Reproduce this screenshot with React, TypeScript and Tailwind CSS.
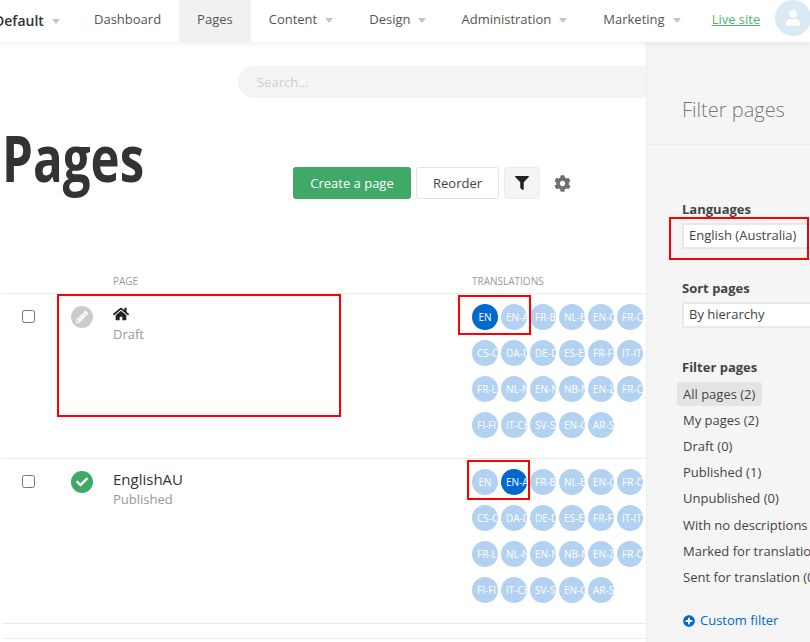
import React from "react";
import { FaHome, FaPencilAlt, FaCheck, FaFilter, FaCog, FaUser, FaPlusCircle } from "react-icons/fa";

const langs = ["FR-BE","NL-BE","EN-CA","FR-CA","CS-CZ","DA-DK","DE-DE","ES-ES","FR-FR","IT-IT","FR-LU","NL-NL","EN-NL","NB-NO","EN-ZA","FR-CH","FI-FI","IT-CH","SV-SE","EN-GB","AR-SA"];

function Caret() {
  return (
    <svg width="8" height="5" viewBox="0 0 8 5" className="ml-2 mt-[1px] shrink-0">
      <polygon points="0,0 8,0 4,5" fill="#c4c4c4" />
    </svg>
  );
}

function NavItem({ label, caret = false, active = false, tight = false }: { label: string; caret?: boolean; active?: boolean; tight?: boolean }) {
  return (
    <div className={`flex h-full items-center pb-[2px] pl-[18px] text-[13px] text-[#555] ${tight ? "pr-[17px]" : "pr-[18px]"} ${active ? "bg-[#f1f1f1]" : ""}`}>
      <span>{label}</span>
      {caret && <Caret />}
    </div>
  );
}

function Bubble({ code, active = false }: { code: string; active?: boolean }) {
  return (
    <div className={`h-[26px] w-[26px] overflow-hidden whitespace-nowrap rounded-full px-[5px] text-center text-[10px] leading-[26px] text-white ${active ? "bg-[#0069d0]" : "bg-[#b3d2f1]"}`}>
      {code}
    </div>
  );
}

function Row({ title, status, icon, activeIndex }: { title: React.ReactNode; status: string; icon: React.ReactNode; activeIndex: number }) {
  const all = ["EN", "EN-AU", ...langs];
  return (
    <div className="ml-[2px] flex h-[165px] border-b border-[#ececec]">
      <div className="w-[20px] shrink-0" />
      <div className="w-[49px] shrink-0 pt-[16px]">
        <input type="checkbox" className="m-0 block h-[13px] w-[13px]" />
      </div>
      <div className="w-[42px] shrink-0 pt-[12px]">{icon}</div>
      <div className="w-[359px] shrink-0 pt-[10px]">
        <div className="flex h-[20px] items-center text-[15px] leading-5 text-[#333]">{title}</div>
        <div className="text-[13px] leading-5 text-[#999]">{status}</div>
      </div>
      <div className="flex w-[174px] flex-wrap content-start gap-x-[3px] gap-y-[10px] pt-[10px]">
        {all.map((c, i) => (
          <Bubble key={c} code={c} active={i === activeIndex} />
        ))}
      </div>
    </div>
  );
}

const filters = ["My pages (2)", "Draft (0)", "Published (1)", "Unpublished (0)", "With no descriptions (0)", "Marked for translation (0)", "Sent for translation (0)"];

function Box({ className }: { className: string }) {
  return <div className={`pointer-events-none absolute border-2 border-[#ff0000] ${className}`} />;
}

export default function App() {
  return (
    <div className="relative h-[642px] w-[810px] overflow-hidden bg-white font-['Open_Sans',sans-serif] text-[#333]">
      <header className="relative z-10 flex h-[42px] items-center bg-white shadow-[0_1px_6px_rgba(0,0,0,0.08)]">
        <div className="ml-[-6px] flex h-full w-[82px] shrink-0 items-center pb-[1px] text-[14px] font-semibold text-[#333]">
          <span>Default</span>
          <Caret />
        </div>
        <NavItem label="Dashboard" />
        <NavItem label="Pages" active />
        <NavItem label="Content" caret />
        <NavItem label="Design" caret tight />
        <NavItem label="Administration" caret />
        <NavItem label="Marketing" caret />
        <a className="ml-[13px] whitespace-nowrap pb-[2px] text-[13px] text-[#4db86a] underline">Live site</a>
        <div className="ml-[15px] flex h-[36px] w-[36px] shrink-0 -translate-y-[3px] items-center justify-center rounded-full bg-[#daeaf4] text-[16px] text-white">
          <FaUser />
        </div>
      </header>

      <div className="flex h-[600px]">
        <main className="w-[646px] shrink-0">
          <div className="ml-[238px] mt-[24px] flex h-[32px] items-center rounded-l-full bg-[#f4f4f4] pl-[19px] pt-[1px] text-[13px] text-[#cfcfcf]">Search...</div>
          <div className="relative mt-[32px] flex h-[69px] items-end">
            <h1 className="absolute left-[2px] top-[-16px] origin-left scale-x-[0.77] text-[64px] font-bold leading-[88px] text-[#333]">Pages</h1>
            <div className="ml-[293px] flex items-center">
              <div className="flex h-[32px] w-[118px] items-center justify-center rounded-[3px] bg-[#40a968] pt-[1px] text-[13px] text-white">Create a page</div>
              <div className="ml-[5px] flex h-[32px] w-[83px] items-center justify-center rounded-[3px] border border-[#e3e3e3] bg-white pt-[1px] text-[13px] text-[#444]">Reorder</div>
              <div className="ml-[5px] flex h-[32px] w-[36px] items-center justify-center rounded-[3px] border border-[#ececec] bg-[#f4f4f4] text-[14px] text-[#222]"><FaFilter /></div>
              <div className="ml-[14px] text-[17px] text-[#6f6f6f]"><FaCog /></div>
            </div>
          </div>
          <div className="ml-[2px] mt-[75px] flex h-[20px] items-start border-b border-[#ececec] text-[10px] leading-[14px] text-[#999]">
            <div className="w-[111px] shrink-0" />
            <div className="w-[359px] shrink-0">PAGE</div>
            <div>TRANSLATIONS</div>
          </div>
          <Row
            title={<FaHome className="-mt-[1px] text-[16px] text-[#222]" />}
            status="Draft"
            activeIndex={0}
            icon={<div className="flex h-[22px] w-[22px] items-center justify-center rounded-full bg-[#cccccc] text-[12px] text-white"><FaPencilAlt /></div>}
          />
          <Row
            title="EnglishAU"
            status="Published"
            activeIndex={1}
            icon={<div className="flex h-[22px] w-[22px] items-center justify-center rounded-full bg-[#40a968] text-[12px] text-white"><FaCheck /></div>}
          />
          <div className="ml-[2px] h-[15px] border-b border-[#ececec]" />
        </main>

        <aside className="w-[300px] shrink-0 border-l border-[#ececec] bg-[#f5f5f5]">
          <div className="flex h-[103px] items-center border-b border-[#ececec] pl-[35px] pt-[34px] text-[20px] font-light text-[#777]">Filter pages</div>
          <div className="pl-[35px]">
            <div className="mt-[55px] text-[13px] font-bold leading-[18px] text-[#444]">Languages</div>
            <div className="mt-[5px] flex h-[26px] w-[200px] items-center border-2 border-[#e8e8e8] bg-white pl-[5px] text-[13px] text-[#444]">English (Australia)</div>
            <div className="mt-[30px] text-[13px] font-bold leading-[18px] text-[#444]">Sort pages</div>
            <div className="mt-[5px] flex h-[26px] w-[200px] items-center border-2 border-[#e8e8e8] bg-white pl-[5px] text-[13px] text-[#444]">By hierarchy</div>
            <div className="mt-[30px] text-[13px] font-bold leading-[18px] text-[#444]">Filter pages</div>
            <div className="-ml-[5px] mt-[6px] flex h-[24px] w-[85px] items-center rounded-[3px] bg-[#e4e4e4] pl-[6px] pt-[2px] text-[13px] text-[#444]">All pages (2)</div>
            {filters.map((f, i) => (
              <div key={f} className={`flex h-[24px] items-center whitespace-nowrap pl-[1px] pt-[2px] text-[13px] text-[#444] ${i === 4 ? "mt-[3px]" : "mt-[2px]"}`}>{f}</div>
            ))}
            <div className="mt-[22px] flex items-center pl-[1px] text-[13px] text-[#0069d0]">
              <FaPlusCircle className="mr-[5px] text-[12px]" />
              <span>Custom filter</span>
            </div>
          </div>
        </aside>
      </div>

      <Box className="left-[57px] top-[294px] h-[123px] w-[284px]" />
      <Box className="left-[458px] top-[295px] h-[40px] w-[73px]" />
      <Box className="left-[467px] top-[460px] h-[40px] w-[63px]" />
      <Box className="left-[669px] top-[217px] h-[43px] w-[140px]" />
    </div>
  );
}
